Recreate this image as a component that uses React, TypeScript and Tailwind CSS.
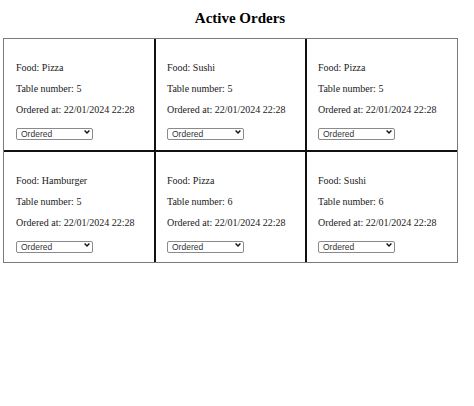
import React from 'react';

interface Order {
  food: string;
  table: number;
  orderedAt: string;
}

const orders: Order[] = [
  { food: 'Pizza', table: 5, orderedAt: '22/01/2024 22:28' },
  { food: 'Sushi', table: 5, orderedAt: '22/01/2024 22:28' },
  { food: 'Pizza', table: 5, orderedAt: '22/01/2024 22:28' },
  { food: 'Hamburger', table: 5, orderedAt: '22/01/2024 22:28' },
  { food: 'Pizza', table: 6, orderedAt: '22/01/2024 22:28' },
  { food: 'Sushi', table: 6, orderedAt: '22/01/2024 22:28' },
];

function StatusSelect() {
  return (
    <div className="relative w-[77px] h-[12px]">
      <select
        defaultValue="Ordered"
        className="appearance-none w-full h-full border border-[#8a8a8a] rounded-[2px] bg-white pl-[4px] py-0 text-[8.5px] leading-[10px] text-[#333] outline-none"
        style={{ fontFamily: '"Liberation Sans", Arial, sans-serif' }}
      >
        <option>Ordered</option>
        <option>Preparing</option>
        <option>Served</option>
      </select>
      <svg
        className="absolute right-[3px] top-[4px] pointer-events-none"
        width="6"
        height="4"
        viewBox="0 0 6 4"
      >
        <path d="M0.6 0.6 L3 3 L5.4 0.6" fill="none" stroke="#111" strokeWidth="1.4" />
      </svg>
    </div>
  );
}

function OrderCard({ order, index }: { order: Order; index: number }) {
  const col = index % 3;
  const row = Math.floor(index / 3);
  return (
    <div
      className={
        'pt-[23px] ' +
        (row === 0 ? 'pb-[12px] ' : 'pb-[11px] ') +
        (col === 0 ? 'pl-[12px] ' : 'pl-[11px] ') +
        (col < 2 ? 'border-r-2 border-r-[#111] ' : '') +
        (row === 0 ? 'border-b-2 border-b-[#111]' : '')
      }
    >
      <p className="leading-[12px] mb-[9px]">Food: {order.food}</p>
      <p className="leading-[12px] mb-[9px]">Table number: {order.table}</p>
      <p className="leading-[12px] mb-[10px]">Ordered at: {order.orderedAt}</p>
      <StatusSelect />
    </div>
  );
}

export default function App() {
  return (
    <div
      className="w-[474px] h-[406px] bg-white text-[#1a1a1a] text-[10px]"
      style={{ fontFamily: '"Liberation Serif", "Times New Roman", serif' }}
    >
      <h1 className="pt-[10px] pl-[6px] text-center text-[15px] leading-[17px] font-bold text-black">
        Active Orders
      </h1>
      <div className="mt-[11px] ml-[3px] w-[455px] grid grid-cols-[152px_151px_1fr] border border-[#7a7a7a]">
        {orders.map((o, i) => (
          <OrderCard key={i} order={o} index={i} />
        ))}
      </div>
    </div>
  );
}
